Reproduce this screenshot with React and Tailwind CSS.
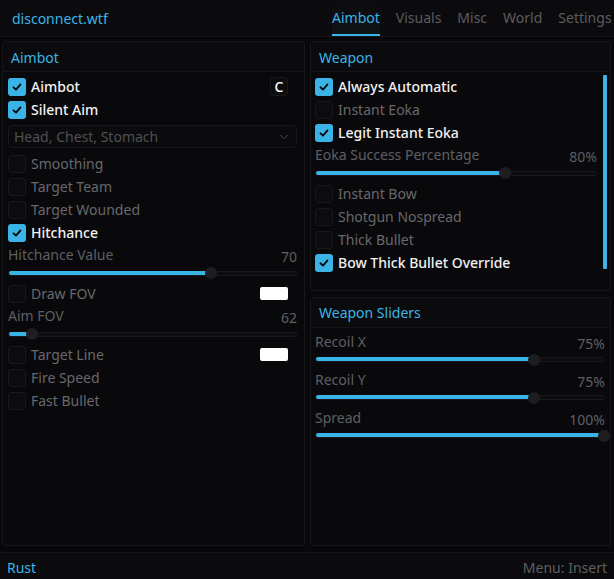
import { ChevronDown } from 'lucide-react'

const BLUE = 'text-[#3cb4e6]'

// ── Small building blocks ───────────────────────────────────────────────────
function Check({ on }) {
  return (
    <div className={`w-[18px] h-[18px] rounded-[3px] flex items-center justify-center shrink-0 ${
      on ? 'bg-[#3ab4e6]' : 'bg-[#0c0c0f] border border-[#19191c]'
    }`}>
      {on && (
        <svg width="10" height="10" viewBox="0 0 10 10">
          <polyline points="1.5,5.3 4,7.6 8.5,2.4" fill="none" stroke="#050505" strokeWidth="1.8" strokeLinecap="round" strokeLinejoin="round" />
        </svg>
      )}
    </div>
  )
}

function Row({ label, on, children }) {
  return (
    <div className="h-[23px] flex items-center gap-[5px]">
      <Check on={on} />
      <span className={`flex-1 ${on ? 'text-[#f2f2f2] font-medium' : 'text-[#68686c]'}`}>{label}</span>
      {children}
    </div>
  )
}

function Swatch() {
  return <div className="w-[28px] h-[13px] rounded-[2px] bg-white mr-[9px]" />
}

function Slider({ label, value, pct }) {
  return (
    <div>
      <div className="h-[20px] flex items-end justify-between text-[#5f5f63]">
        <span className="pb-[2px]">{label}</span>
        <span>{value}</span>
      </div>
      <div className="h-[18px] flex items-center">
        <div className="relative w-full h-[5px] rounded-full bg-[#0d0d10] border border-[#19191c]">
          <div className="h-[4px] -mt-px rounded-full bg-[#3ab4e6]" style={{ width: `${pct}%` }} />
          <div
            className="absolute top-1/2 w-[12px] h-[12px] -mt-[6px] -ml-[6px] rounded-full bg-[#1e1e21]"
            style={{ left: `${pct}%` }}
          />
        </div>
      </div>
    </div>
  )
}

function Panel({ title, className = '', children }) {
  return (
    <div className={`flex flex-col border border-[#17171a] rounded-[3px] bg-[#09090b] overflow-hidden ${className}`}>
      <div className={`h-[30px] shrink-0 flex items-center px-[8px] pt-[2px] bg-[#0b0b0e] border-b border-[#16161a] ${BLUE}`}>
        {title}
      </div>
      {children}
    </div>
  )
}

// ── Main menu ──────────────────────────────────────────────────────────────
export default function App() {
  const tabs = ['Aimbot', 'Visuals', 'Misc', 'World', 'Settings']

  return (
    <div className="w-[614px] h-[579px] flex flex-col overflow-hidden bg-[#08080a] text-sm leading-none font-['Noto_Sans',sans-serif]">

      {/* Top bar */}
      <div className="h-[37px] shrink-0 flex items-stretch bg-[#0b0b0d] border-b border-[#151518] overflow-hidden">
        <div className={`w-[332px] shrink-0 pl-[12px] flex items-center pt-[1px] ${BLUE}`}>disconnect.wtf</div>
        <div className="flex gap-[16px] whitespace-nowrap">
          {tabs.map((t, i) => (
            <div
              key={t}
              className={`flex items-center pt-[1px] border-b-2 ${
                i === 0 ? 'text-[#3cb4e6] border-[#3ab4e6] bg-gradient-to-b from-transparent to-[#0f1418]' : 'text-[#5c5c60] border-transparent'
              }`}
            >
              {t}
            </div>
          ))}
        </div>
      </div>

      {/* Panels */}
      <div className="flex-1 min-h-0 flex gap-[5px] pt-[4px] pl-[2px] pr-[3px] pb-[6px]">
        <Panel title="Aimbot" className="w-[303px]">
          <div className="pl-[5px] pr-[7px] pt-[3px]">
            <Row label="Aimbot" on>
              <div className="w-[18px] h-[19px] mr-[9px] flex items-center justify-center rounded-[3px] bg-[#0c0c0f] border border-[#19191c] text-white font-medium">C</div>
            </Row>
            <Row label="Silent Aim" on />
            <div className="pt-[4px] pb-[4px]">
              <div className="h-[23px] flex items-center justify-between px-[5px] rounded-[4px] border border-[#19191c] bg-[#0b0b0d] text-[#505054]">
                <span>Head, Chest, Stomach</span>
                <ChevronDown size={14} className="text-[#505054]" strokeWidth={1.5} />
              </div>
            </div>
            <Row label="Smoothing" />
            <Row label="Target Team" />
            <Row label="Target Wounded" />
            <Row label="Hitchance" on />
            <Slider label="Hitchance Value" value="70" pct={70.3} />
            <Row label="Draw FOV"><Swatch /></Row>
            <Slider label="Aim FOV" value="62" pct={7.9} />
            <Row label="Target Line"><Swatch /></Row>
            <Row label="Fire Speed" />
            <Row label="Fast Bullet" />
          </div>
        </Panel>

        <div className="flex-1 flex flex-col gap-[6px]">
          <Panel title="Weapon" className="flex-1">
            <div className="flex">
              <div className="flex-1 pl-[4px] pr-[6px] pt-[3px]">
                <Row label="Always Automatic" on />
                <Row label="Instant Eoka" />
                <Row label="Legit Instant Eoka" on />
                <Slider label="Eoka Success Percentage" value="80%" pct={67.4} />
                <Row label="Instant Bow" />
                <Row label="Shotgun Nospread" />
                <Row label="Thick Bullet" />
                <Row label="Bow Thick Bullet Override" on />
              </div>
              <div className="w-[4px] h-[194px] mt-[3px] mr-[3px] rounded-[1px] bg-[#3ab4e6]" />
            </div>
          </Panel>

          <Panel title="Weapon Sliders" className="flex-1">
            <div className="pl-[4px] pr-[5px] pt-[3px]">
              <Slider label="Recoil X" value="75%" pct={75.7} />
              <Slider label="Recoil Y" value="75%" pct={75.7} />
              <Slider label="Spread" value="100%" pct={100} />
            </div>
          </Panel>
        </div>
      </div>

      {/* Footer */}
      <div className="h-[27px] shrink-0 flex items-center justify-between px-[7px] pt-[4px] bg-[#0b0b0d] border-t border-[#151518]">
        <span className={BLUE}>Rust</span>
        <span className="text-[#5f5f63]">Menu: Insert</span>
      </div>
    </div>
  )
}
